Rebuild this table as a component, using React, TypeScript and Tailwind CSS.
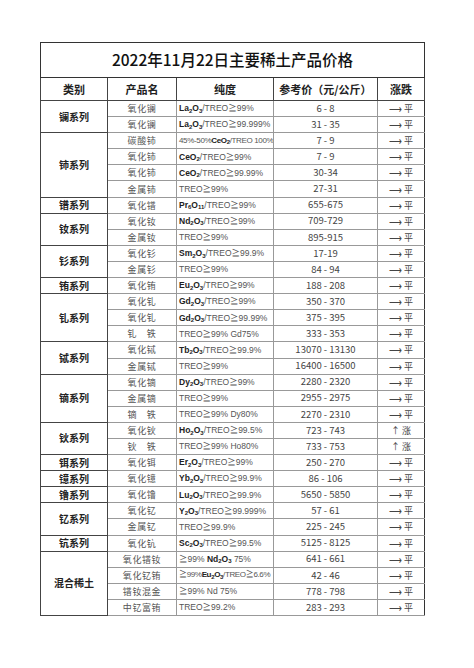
import React from "react";

type Row = { name: string; p: [string, string, string]; price: string; up?: boolean; tight?: boolean };
type Group = { cat: string; rows: Row[] };

const T = "/TREO≧";

const groups: Group[] = [
  { cat: "镧系列", rows: [
    { name: "氧化镧", p: ["", "La2O3", T + "99%"], price: "6 - 8" },
    { name: "氧化镧", p: ["", "La2O3", T + "99.999%"], price: "31 - 35" },
  ]},
  { cat: "铈系列", rows: [
    { name: "碳酸铈", p: ["45%-50%", "CeO2", "/TREO 100%"], price: "7 - 9", tight: true },
    { name: "氧化铈", p: ["", "CeO2", T + "99%"], price: "7 - 9" },
    { name: "氧化铈", p: ["", "CeO2", T + "99.99%"], price: "30-34" },
    { name: "金属铈", p: ["TREO≧99%", "", ""], price: "27-31" },
  ]},
  { cat: "镨系列", rows: [
    { name: "氧化镨", p: ["", "Pr6O11", T + "99%"], price: "655-675" },
  ]},
  { cat: "钕系列", rows: [
    { name: "氧化钕", p: ["", "Nd2O3", T + "99%"], price: "709-729" },
    { name: "金属钕", p: ["TREO≧99%", "", ""], price: "895-915" },
  ]},
  { cat: "钐系列", rows: [
    { name: "氧化钐", p: ["", "Sm2O3", T + "99.9%"], price: "17-19" },
    { name: "金属钐", p: ["TREO≧99%", "", ""], price: "84 - 94" },
  ]},
  { cat: "铕系列", rows: [
    { name: "氧化铕", p: ["", "Eu2O3", T + "99%"], price: "188 - 208" },
  ]},
  { cat: "钆系列", rows: [
    { name: "氧化钆", p: ["", "Gd2O3", T + "99%"], price: "350 - 370" },
    { name: "氧化钆", p: ["", "Gd2O3", T + "99.99%"], price: "375 - 395" },
    { name: "钆　铁", p: ["TREO≧99% Gd75%", "", ""], price: "333 - 353" },
  ]},
  { cat: "铽系列", rows: [
    { name: "氧化铽", p: ["", "Tb2O3", T + "99.9%"], price: "13070 - 13130" },
    { name: "金属铽", p: ["TREO≧99%", "", ""], price: "16400 - 16500" },
  ]},
  { cat: "镝系列", rows: [
    { name: "氧化镝", p: ["", "Dy2O3", T + "99%"], price: "2280 - 2320" },
    { name: "金属镝", p: ["TREO≧99%", "", ""], price: "2955 - 2975" },
    { name: "镝　铁", p: ["TREO≧99% Dy80%", "", ""], price: "2270 - 2310" },
  ]},
  { cat: "钬系列", rows: [
    { name: "氧化钬", p: ["", "Ho2O3", T + "99.5%"], price: "723 - 743", up: true },
    { name: "钬　铁", p: ["TREO≧99% Ho80%", "", ""], price: "733 - 753", up: true },
  ]},
  { cat: "铒系列", rows: [
    { name: "氧化铒", p: ["", "Er2O3", T + "99%"], price: "250 - 270" },
  ]},
  { cat: "镱系列", rows: [
    { name: "氧化镱", p: ["", "Yb2O3", T + "99.9%"], price: "86 - 106" },
  ]},
  { cat: "镥系列", rows: [
    { name: "氧化镥", p: ["", "Lu2O3", T + "99.9%"], price: "5650 - 5850" },
  ]},
  { cat: "钇系列", rows: [
    { name: "氧化钇", p: ["", "Y2O3", T + "99.999%"], price: "57 - 61" },
    { name: "金属钇", p: ["TREO≧99.9%", "", ""], price: "225 - 245" },
  ]},
  { cat: "钪系列", rows: [
    { name: "氧化钪", p: ["", "Sc2O3", T + "99.5%"], price: "5125 - 8125" },
  ]},
  { cat: "混合稀土", rows: [
    { name: "氧化镨钕", p: ["≧99% ", "Nd2O3", " 75%"], price: "641 - 661" },
    { name: "氧化钇铕", p: ["≧99%", "Eu2O3", "/TREO≧6.6%"], price: "42 - 46", tight: true },
    { name: "镨钕混金", p: ["≧99% Nd 75%", "", ""], price: "778 - 798" },
    { name: "中钇富铕", p: ["TREO≧99.2%", "", ""], price: "283 - 293" },
  ]},
];

function Formula({ s }: { s: string }) {
  if (!s) return null;
  const parts = s.split(/(\d+)/).filter((x) => x !== "");
  return (
    <b className="font-bold text-[#222]">
      {parts.map((p, i) =>
        /^\d+$/.test(p) ? (
          <sub key={i} className="text-[6px]">{p}</sub>
        ) : (
          <span key={i}>{p}</span>
        )
      )}
    </b>
  );
}

export default function App() {
  return (
    <div
      className="w-[474px] h-[668px] bg-white pt-[42px] pl-[40px]"
      style={{ fontFamily: '"Noto Sans CJK SC", "Noto Sans", sans-serif' }}
    >
      <table className="border-collapse border border-[#333] w-[384px] table-fixed text-[#333]">
        <colgroup>
          <col className="w-[67px]" />
          <col className="w-[69px]" />
          <col className="w-[97px]" />
          <col className="w-[104px]" />
          <col className="w-[47px]" />
        </colgroup>
        <tbody>
          <tr className="h-[35px]">
            <td colSpan={5} className="border border-[#333] text-center text-[15.5px] font-medium text-[#111] leading-none">
              2022年11月22日主要稀土产品价格
            </td>
          </tr>
          <tr className="h-[23px] text-[11px] font-bold text-[#222]">
            <td className="border border-[#444] text-center leading-none">类别</td>
            <td className="border border-[#444] text-center leading-none">产品名</td>
            <td className="border border-[#444] text-center leading-none">纯度</td>
            <td className="border border-[#444] text-center leading-none">参考价（元/公斤）</td>
            <td className="border border-[#444] text-center leading-none">涨跌</td>
          </tr>
          {groups.map((g) =>
            g.rows.map((r, i) => (
              <tr key={g.cat + i} className="h-[16.1px]">
                {i === 0 && (
                  <td
                    rowSpan={g.rows.length}
                    className="border border-[#444] text-center text-[10px] font-bold text-[#222] leading-none"
                  >
                    {g.cat}
                  </td>
                )}
                <td
                  className={
                    "border-b border-r border-[#999] text-center text-[9px] tracking-[0.6px] text-[#555] leading-none " +
                    (i === 0 ? "border-t border-t-[#444]" : "")
                  }
                >
                  {r.name}
                </td>
                <td
                  className={
                    "border-b border-r border-l border-[#999] border-l-[#555] pl-[2px] text-left text-[#555] leading-none whitespace-nowrap overflow-hidden " +
                    (r.tight ? "text-[8px] tracking-[-0.35px] " : "text-[8.5px] ") +
                    (i === 0 ? "border-t border-t-[#444]" : "")
                  }
                  style={{ fontFamily: '"Liberation Sans", "Noto Sans CJK SC", sans-serif' }}
                >
                  {r.p[0]}
                  <Formula s={r.p[1]} />
                  {r.p[2]}
                </td>
                <td
                  className={
                    "border-b border-r border-[#999] text-center text-[9.5px] text-[#444] leading-none " +
                    (i === 0 ? "border-t border-t-[#444]" : "")
                  }
                >
                  {r.price}
                </td>
                <td
                  className={
                    "border-b border-[#999] text-center text-[9px] text-[#444] leading-none " +
                    (i === 0 ? "border-t border-t-[#444]" : "")
                  }
                >
                  {r.up ? "↑ 涨" : "⟶ 平"}
                </td>
              </tr>
            ))
          )}
        </tbody>
      </table>
    </div>
  );
}
